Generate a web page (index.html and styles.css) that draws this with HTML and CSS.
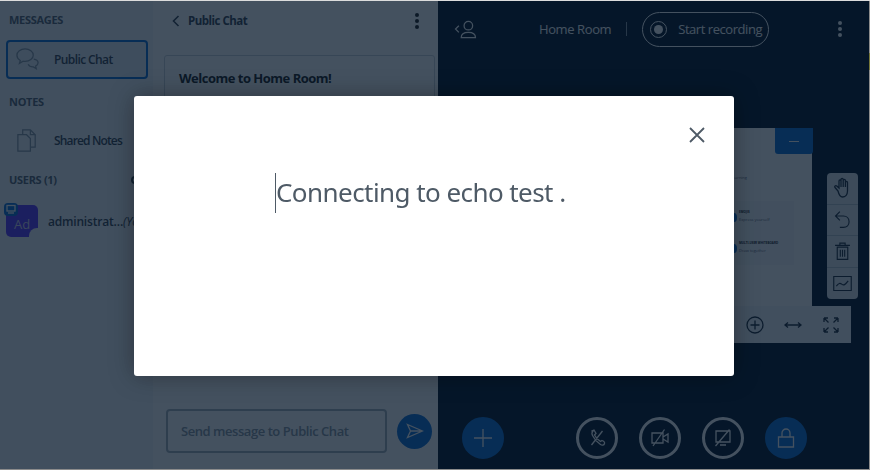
FILE: index.html
```html
<!DOCTYPE html>
<html lang="en">
<head>
    <meta charset="UTF-8">
    <title>Home Room</title>
    <link rel="stylesheet" href="styles.css">
</head>
<body>
<div class="app">

    <!-- Left panel -->
    <aside class="sidebar">
        <h3 class="side-title">MESSAGES</h3>
        <div class="side-item active">
            <svg class="side-icon" viewBox="0 0 26 26"><path d="M10.500 2C5.800 2 2 4.900 2 8.600c0 2.300 1.400 4.200 3.500 5.400L4.600 17l3.900-2.200c.7.100 1.300.2 2 .2 4.700 0 8.500-2.900 8.500-6.400S15.200 2 10.500 2z"/><path d="M19.500 12.500c2.500.4 4.500 2 4.500 4 0 1.500-1 2.700-2.500 3.400l.6 2.600-3-1.800c-2.300.1-4.600-.8-5.400-2.700"/></svg>
            <span>Public Chat</span>
        </div>
        <h3 class="side-title notes-title">NOTES</h3>
        <div class="side-item notes-item">
            <svg class="side-icon" viewBox="0 0 26 26"><path d="M3 7h9l4 4v13H3z"/><path d="M8 7V2h8l5 5v13h-5"/><path d="M16 2v5h5"/></svg>
            <span>Shared Notes</span>
        </div>
        <div class="users-head">
            <h3 class="side-title">USERS (1)</h3>
            <span class="users-gear"></span>
        </div>
        <div class="user-row">
            <div class="avatar">
                Ad
                <span class="presenter">
                    <svg viewBox="0 0 14 12"><rect x="3" y="2.500" width="8" height="5.500"/><path d="M4 10h6"/></svg>
                </span>
                <span class="avatar-notch"></span>
            </div>
            <span class="user-name">administrat…<i>(You)</i></span>
        </div>
    </aside>

    <!-- Chat panel -->
    <section class="chat">
        <header class="chat-head">
            <svg class="chat-back" viewBox="0 0 8 12"><path d="M6.500 1L1.500 6l5 5"/></svg>
            <span class="chat-title">Public Chat</span>
            <span class="kebab dark"><i></i><i></i><i></i></span>
        </header>
        <div class="chat-log">
            <div class="welcome">Welcome to Home Room!</div>
        </div>
        <form class="chat-form">
            <div class="chat-input">Send message to Public Chat</div>
            <button type="button" class="send-btn">
                <svg viewBox="0 0 18 18"><path d="M1.500 2.500L16.500 9 1.500 15.500 4.500 9zM4.500 9h12"/></svg>
            </button>
        </form>
    </section>

    <!-- Presentation area -->
    <main class="main">
        <header class="navbar">
            <svg class="nav-users" viewBox="0 0 24 20"><path d="M5 6L1.500 9.500 5 13"/><circle cx="15" cy="6" r="4.500"/><path d="M7.500 18.500c0-3.500 3-5.500 7.500-5.500s7.500 2 7.500 5.500z"/></svg>
            <span class="room-name">Home Room</span>
            <span class="nav-sep"></span>
            <div class="record-pill">
                <span class="record-dot"><i></i></span>
                <span>Start recording</span>
            </div>
            <span class="kebab light"><i></i><i></i><i></i></span>
        </header>

        <div class="stage">
            <div class="slide">
                <button type="button" class="minimize"><i></i></button>
                <div class="slide-line">Start learning</div>
                <div class="slide-card">
                    <div class="slide-feature"><b>EMOJIS</b><span>Express yourself</span></div>
                    <div class="slide-feature"><b>MULTI-USER WHITEBOARD</b><span>Draw together</span></div>
                </div>
            </div>
            <div class="wb-tools">
                <div class="wb-tool">
                    <svg class="wb-hand" viewBox="0 0 24 24"><path d="M7 15l-3-3.500c-1-1.200.6-2.600 1.800-1.500L8 12V5c0-1.500 2-1.500 2 0V3.500c0-1.500 2.200-1.500 2.200 0V4.500c0-1.500 2.200-1.500 2.200 0V6.500c0-1.400 2.100-1.400 2.100 0V15c0 4-2.500 6-5 6s-3.500-2-4.500-6zM10 5v6M12.200 4v7M14.400 5v6"/></svg>
                </div>
                <div class="wb-tool">
                    <svg viewBox="0 0 24 24"><path d="M9 3L4 8l5 5M4 8h9c4 0 6.500 2.800 6.500 6.500S17 21 13 21H9"/></svg>
                </div>
                <div class="wb-tool">
                    <svg viewBox="0 0 24 24"><path d="M6 7h12v14H6zM3.500 5h17M9 5V2.500h6V5M9.500 10v8M12 10v8M14.500 10v8"/></svg>
                </div>
                <div class="wb-tool">
                    <svg viewBox="0 0 24 24"><path d="M2 4h20v16H2zM5 15c2.500-4 4.500-3.500 6.500-2s4 0 7-4"/></svg>
                </div>
            </div>
            <div class="zoom-bar">
                <svg viewBox="0 0 20 20"><circle cx="10" cy="10" r="8"/><path d="M10 5.500v9M5.500 10h9"/></svg>
                <svg viewBox="0 0 20 20"><path d="M2 10h16M5 7.500L2 10l3 2.500M15 7.500l3 2.500-3 2.500"/></svg>
                <svg viewBox="0 0 20 20"><path d="M3 3h4M3 3v4M3 3l4.500 4.500M17 3h-4M17 3v4M17 3l-4.500 4.500M3 17h4M3 17v-4M3 17l4.500-4.500M17 17h-4M17 17v-4M17 17l-4.500-4.500"/></svg>
            </div>
        </div>

        <footer class="actions">
            <button type="button" class="round filled plus">
                <svg viewBox="0 0 20 20"><path d="M10 1v18M1 10h18"/></svg>
            </button>
            <div class="action-group">
                <button type="button" class="round">
                    <svg viewBox="0 0 20 20"><path d="M4.500 3L7 2l2 3.500-1.500 1.500c1.500 3 3.500 5 6 6.500l1.500-1c1.500.5 3 1.500 2.500 3-.5 2-2.500 2-4 1-3-2-6.500-6-8-9-.8-1.600-1-3 .5-4.500zM15.500 3L4.500 17"/></svg>
                </button>
                <button type="button" class="round">
                    <svg viewBox="0 0 20 20"><path d="M2 5h11v10H2zM13 9l5-3v8l-5-3M14.500 1.500L3 18"/></svg>
                </button>
                <button type="button" class="round">
                    <svg viewBox="0 0 20 20"><path d="M3 3h14v11H3zM7 17h6M16.500 1.500L2.500 18"/></svg>
                </button>
                <button type="button" class="round filled">
                    <svg viewBox="0 0 20 20"><path d="M2.500 9h15v10h-15zM6 9V5a4 4 0 0 1 8 0v4"/></svg>
                </button>
            </div>
        </footer>
    </main>
</div>

<!-- Audio modal -->
<div class="overlay">
    <div class="modal">
        <button type="button" class="modal-close">
            <svg viewBox="0 0 16 16"><path d="M1 1l14 14M15 1L1 15"/></svg>
        </button>
        <div class="connecting"><span class="caret"></span><span class="connecting-text">Connecting to echo test .</span></div>
    </div>
</div>
</body>
</html>
```

FILE: styles.css
```css
* {
    box-sizing: border-box;
}

html, body {
    height: 100%;
}

body {
    margin: 0;
    padding: 1px 1px 1px 0;
    background-color: #8c8c8c;
    background-image: linear-gradient(#dcdcdc 1px, transparent 1px, transparent 53px, #77783a 53px, #77783a 70px, transparent 70px);
    font-family: 'Open Sans', 'Noto Sans', sans-serif;
    color: #222;
    overflow: hidden;
}

svg {
    display: block;
    fill: none;
    stroke: currentColor;
    stroke-width: 1.3;
}

.app {
    display: grid;
    grid-template-columns: 153px 285px 1fr;
    height: 100%;
}

/* Left panel */
.sidebar {
    background-color: #f3f6f9;
    padding: 12px 6px 0;
}

.side-title {
    margin: 0;
    padding-left: 3px;
    font-size: 11px;
    line-height: 14px;
    font-weight: 700;
    letter-spacing: -0.3px;
    color: #5a6673;
}

.side-item {
    display: flex;
    align-items: center;
    height: 39px;
    margin-top: 13px;
    padding-left: 7px;
    gap: 14px;
    width: 142px;
    border: 2px solid transparent;
    border-radius: 4px;
    font-size: 12px;
    font-weight: 600;
    letter-spacing: -0.6px;
    color: #3b4653;
}

.side-item.active {
    border-color: #0f70d7;
    background-color: #e6edf5;
}

.side-icon {
    width: 25px;
    height: 25px;
    color: #8b9aa8;
    flex: none;
}

.notes-title {
    margin-top: 16px;
}

.notes-item {
    margin-top: 12px;
    letter-spacing: -0.85px;
}

.users-head {
    display: flex;
    justify-content: space-between;
    margin-top: 13px;
    width: 133px;
}

.users-gear {
    width: 8px;
    height: 8px;
    margin-top: 3px;
    border: 2px solid #3b4653;
    border-radius: 50%;
}

.user-row {
    display: flex;
    align-items: center;
    gap: 10px;
    margin-top: 18px;
    white-space: nowrap;
}

.avatar {
    position: relative;
    display: flex;
    align-items: center;
    justify-content: center;
    flex: none;
    width: 32px;
    height: 32px;
    padding-top: 5px;
    border-radius: 5px;
    background-color: #5e38ff;
    color: #d4d2ee;
    font-size: 13px;
}

.presenter {
    position: absolute;
    left: -2px;
    top: -2px;
    width: 14px;
    height: 13px;
    border-radius: 4px;
    background-color: #0f70d7;
    color: #fff;
}

.avatar-notch {
    position: absolute;
    right: -1px;
    bottom: -1px;
    width: 10px;
    height: 10px;
    border-radius: 8px 0 0 0;
    background-color: #f3f6f9;
}

.user-name {
    font-size: 12px;
    font-weight: 600;
    letter-spacing: -0.2px;
    color: #3b4653;
}

.user-name i {
    font-weight: 400;
}

/* Chat panel */
.chat {
    display: flex;
    flex-direction: column;
    background-color: #fff;
    padding: 0 3px 0 11px;
}

.chat-head {
    display: flex;
    align-items: center;
    height: 39px;
    padding-left: 8px;
    color: #3b4653;
}

.chat-back {
    width: 8px;
    height: 12px;
    stroke-width: 1.600;
}

.chat-title {
    margin-left: 8px;
    font-size: 11.500px;
    font-weight: 700;
    letter-spacing: -0.5px;
}

.kebab {
    display: flex;
    flex-direction: column;
    gap: 2px;
    margin-left: auto;
}

.kebab i {
    display: block;
    width: 4px;
    height: 4px;
    border-radius: 50%;
    background-color: currentColor;
}

.kebab.dark {
    margin-right: 16px;
    color: #222;
}

.kebab.light {
    margin-right: 27px;
    color: #fff;
}

.chat-log {
    flex: 1;
    padding-top: 15px;
}

.welcome {
    height: 120px;
    padding: 13px 14px;
    border: 1px solid #c9d2da;
    border-radius: 3px;
    font-size: 13px;
    font-weight: 700;
    letter-spacing: -0.5px;
}

.chat-form {
    display: flex;
    align-items: center;
    gap: 10px;
    padding: 0 0 16px 2px;
}

.chat-input {
    display: flex;
    align-items: center;
    width: 221px;
    height: 44px;
    padding-left: 13px;
    border: 2px solid #a7b3bd;
    border-radius: 4px;
    font-size: 13px;
    font-weight: 600;
    letter-spacing: -0.45px;
    color: #8b97a3;
}

.send-btn {
    display: flex;
    align-items: center;
    justify-content: center;
    width: 35px;
    height: 35px;
    padding: 0;
    border: none;
    border-radius: 50%;
    background-color: #0f70d7;
    color: #fff;
}

.send-btn svg {
    width: 18px;
    height: 18px;
}

/* Presentation area */
.main {
    display: flex;
    flex-direction: column;
    background-color: #06172a;
}

.navbar {
    display: flex;
    align-items: center;
    height: 56px;
    padding-left: 16px;
    color: #fff;
    flex: none;
}

.nav-users {
    width: 23px;
    height: 19px;
    flex: none;
}

.room-name {
    margin-left: 62px;
    font-size: 13px;
    letter-spacing: -0.4px;
}

.nav-sep {
    width: 1px;
    height: 14px;
    margin: 0 15px 0 15px;
    background-color: #8b97a3;
}

.record-pill {
    display: flex;
    align-items: center;
    gap: 11px;
    width: 127px;
    height: 35px;
    padding-left: 7px;
    border: 1px solid #fff;
    border-radius: 18px;
    font-size: 13px;
    letter-spacing: -0.45px;
    white-space: nowrap;
}

.record-dot {
    display: flex;
    align-items: center;
    justify-content: center;
    width: 17px;
    height: 17px;
    border: 1px solid #fff;
    border-radius: 50%;
    flex: none;
}

.record-dot i {
    width: 9px;
    height: 9px;
    border-radius: 50%;
    background-color: #fff;
}

.stage {
    position: relative;
    flex: 1;
    padding: 71px 57px 0 22px;
}

.slide {
    position: relative;
    height: 178px;
    padding: 47px 0 0 250px;
    background-color: #fff;
    font-size: 4px;
    color: #667;
}

.minimize {
    position: absolute;
    right: -1px;
    top: 0;
    display: flex;
    align-items: center;
    justify-content: center;
    width: 38px;
    height: 26px;
    padding: 0;
    border: none;
    border-radius: 0 0 3px 3px;
    background-color: #0f70d7;
}

.minimize i {
    width: 10px;
    height: 1px;
    background-color: #fff;
}

.slide-line {
    padding-right: 65px;
    text-align: right;
    white-space: nowrap;
}

.slide-card {
    width: 59px;
    height: 64px;
    margin: 21px 0 0 25px;
    padding-top: 9px;
    background-color: #f7f8fa;
    white-space: nowrap;
}

.slide-feature {
    position: relative;
    display: flex;
    flex-direction: column;
    gap: 3px;
    height: 31px;
    margin-left: 4px;
}

.slide-feature::before {
    content: "";
    position: absolute;
    left: -8px;
    top: 3px;
    width: 6px;
    height: 9px;
    border-radius: 50%;
    background-color: #0f70d7;
}

.slide-feature b {
    font-size: 3px;
    color: #222;
}

.wb-tools {
    position: absolute;
    right: 11px;
    top: 116px;
    display: flex;
    flex-direction: column;
    width: 31px;
    border-radius: 4px;
    background-color: #e2e7ec;
    color: #222f3e;
}

.wb-tool {
    display: flex;
    align-items: center;
    justify-content: center;
    height: 31.500px;
    border-bottom: 1px solid #b9c2cb;
}

.wb-tool:last-child {
    border-bottom: none;
}

.wb-tool svg {
    width: 21px;
    height: 21px;
}

.wb-tool .wb-hand {
    width: 24px;
    height: 24px;
}

.zoom-bar {
    position: absolute;
    right: 18px;
    top: 249px;
    display: flex;
    align-items: center;
    justify-content: flex-end;
    gap: 18px;
    width: 300px;
    height: 37px;
    padding-right: 10px;
    background-color: #f3f6f9;
    color: #222f3e;
}

.zoom-bar svg {
    width: 20px;
    height: 20px;
}

/* Bottom actions */
.actions {
    position: relative;
    display: flex;
    align-items: center;
    justify-content: center;
    height: 62px;
    flex: none;
}

.action-group {
    display: flex;
    gap: 21px;
    margin-left: 76px;
}

.round {
    display: flex;
    align-items: center;
    justify-content: center;
    width: 42px;
    height: 42px;
    padding: 0;
    border: 3px solid #fff;
    border-radius: 50%;
    background-color: transparent;
    color: #fff;
}

.round.filled {
    border-color: #0f70d7;
    background-color: #0f70d7;
}

.round svg {
    width: 20px;
    height: 20px;
}

.round.plus {
    position: absolute;
    left: 24px;
    top: 10px;
}

/* Audio modal */
.overlay {
    position: fixed;
    inset: 1px 1px 1px 0;
    display: flex;
    align-items: center;
    justify-content: center;
    padding: 2px 1px 0 0;
    background-color: rgba(6, 23, 42, 0.75);
}

.modal {
    position: relative;
    width: 600px;
    height: 280px;
    padding: 77px 0 0 141px;
    border-radius: 3px;
    background-color: #fff;
    box-shadow: 0 0 24px rgba(0, 0, 0, 0.35);
}

.modal-close {
    position: absolute;
    right: 29px;
    top: 31px;
    width: 16px;
    height: 16px;
    padding: 0;
    border: none;
    background: transparent;
    color: #4e5a66;
}

.modal-close svg {
    stroke-width: 1.800;
}

.connecting {
    display: flex;
    align-items: center;
    height: 40px;
    font-family: 'Noto Sans', sans-serif;
    font-size: 26px;
    letter-spacing: -0.56px;
    color: #4e5a66;
    white-space: nowrap;
}

.connecting-text {
    margin-bottom: 3px;
}

.caret {
    width: 1px;
    height: 40px;
    background-color: #4e5a66;
    flex: none;
}
```
